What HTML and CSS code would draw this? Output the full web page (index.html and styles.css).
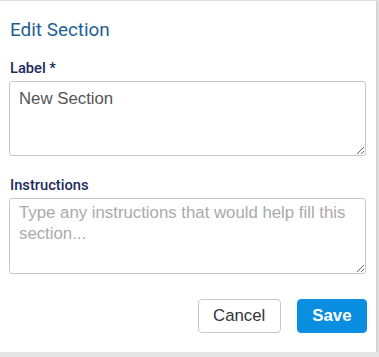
FILE: index.html
```html
<!DOCTYPE html>
<html lang="en">
  <head>
    <meta charset="UTF-8" />
    <meta name="viewport" content="width=device-width, initial-scale=1.0" />
    <title>Edit Section</title>
    <link rel="stylesheet" href="styles.css">
  </head>
  <body>
    <div class="panel">
      <h2 class="panel-title">Edit Section</h2>
      <label class="field-label" for="label">Label *</label>
      <textarea class="field-input" id="label">New Section</textarea>
      <label class="field-label" for="instructions">Instructions</label>
      <textarea class="field-input scrolled" id="instructions" placeholder="Type any instructions that would help fill this section..."></textarea>
      <div class="actions">
        <button class="btn btn-cancel">Cancel</button>
        <button class="btn btn-save">Save</button>
      </div>
    </div>
  </body>
</html>
```

FILE: styles.css
```css
* {
  box-sizing: border-box;
}
body {
  margin: 0;
  background-color: #e6e6e6;
}
.panel {
  width: 376px;
  height: 352px;
  background-color: #fff;
  border-top: 1px solid #dcdcdc;
  box-shadow: 1px 1px 3px rgba(0, 0, 0, 0.15);
  padding: 18px 10px 0 9px;
  display: flex;
  flex-direction: column;
}
.panel-title {
  margin: 0 0 18px 1px;
  font-family: Roboto, sans-serif;
  font-weight: 400;
  font-size: 18.9px;
  line-height: 22px;
  color: #1f5f93;
}
.field-label {
  display: block;
  margin: 0 0 4px 1px;
  font-family: Roboto, sans-serif;
  font-weight: 500;
  font-size: 14.7px;
  line-height: 18px;
  color: #1c2b5e;
}
.field-input {
  width: 357px;
  height: 75px;
  margin: 0 0 20px 0;
  padding: 6px 9px 5px;
  border: 1px solid #c8c8c8;
  border-radius: 3px;
  font-family: "Liberation Sans", Arial, sans-serif;
  font-size: 16.8px;
  line-height: 21px;
  color: #555;
  resize: vertical;
}
.field-input::placeholder {
  color: #aaa;
}
.field-input.scrolled {
  height: 76px;
  padding-top: 3px;
  margin-bottom: 25px;
}
.actions {
  display: flex;
  justify-content: flex-end;
  gap: 16px;
  margin-right: -1px;
}
.btn {
  height: 34px;
  padding: 0 14.5px;
  border-radius: 4px;
  font-family: "Liberation Sans", Arial, sans-serif;
  font-size: 16.8px;
  cursor: pointer;
}
.btn-cancel {
  background-color: #fff;
  border: 1px solid #c8c8c8;
  color: #333;
}
.btn-save {
  background-color: #0a8fe0;
  border: 1px solid #0a8fe0;
  color: #fff;
  font-weight: bold;
}
```
